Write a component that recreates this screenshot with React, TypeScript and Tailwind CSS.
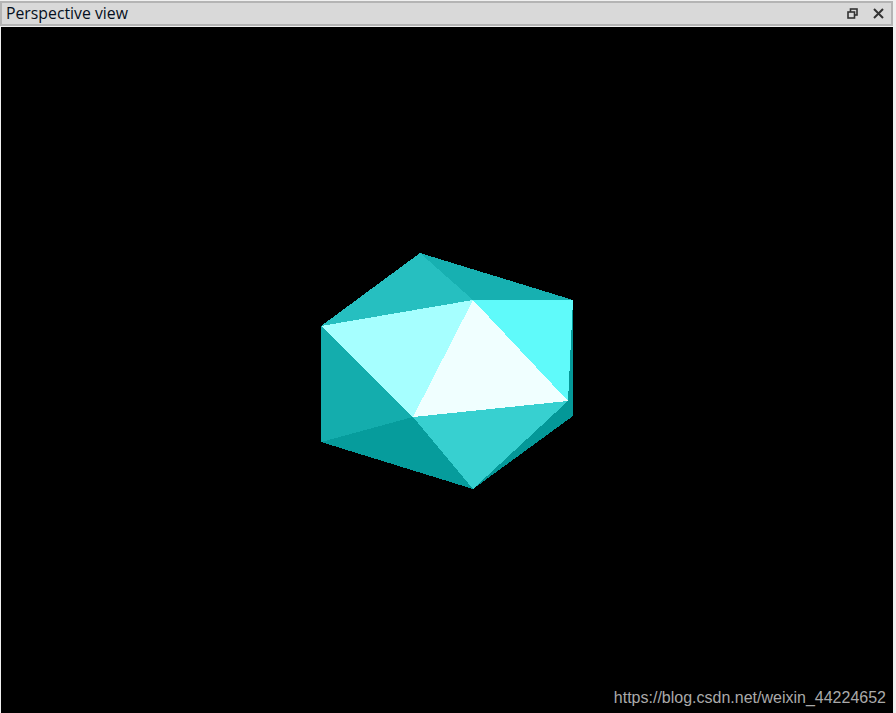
const faces: [string, string][] = [
  ["420,253 321,326 473,300", "#26bfc0"],
  ["420,253 473,300 573,300", "#17b0b1"],
  ["321,326 473,300 413,417", "#a6ffff"],
  ["473,300 568,401 413,417", "#f0ffff"],
  ["473,300 573,300 568,401", "#5ffafa"],
  ["321,326 413,417 321,442", "#14adad"],
  ["321,442 413,417 473,489", "#069c9c"],
  ["413,417 568,401 473,489", "#37d0d0"],
  ["573,300 573,416 473,489 568,401", "#049898"],
];

export default function App() {
  return (
    <div className="flex h-[713px] w-[896px] flex-col overflow-hidden bg-[#f0f0f0]">
      <div className="mt-px flex h-[25px] w-[893px] shrink-0 items-center justify-between border-2 border-[#b4b4b4] bg-[#d9d9d9] pl-1 pr-[7px] font-['Open_Sans',sans-serif] text-[15.8px] text-[#050f20]">
        <span>Perspective view</span>
        <div className="flex items-center gap-[15px]">
          <svg width="11" height="11" viewBox="0 0 11 11" fill="none" stroke="#333" strokeWidth="1.6">
            <rect x="3.5" y="1" width="6.5" height="6" />
            <rect x="1" y="4" width="6.5" height="6" fill="#d9d9d9" />
          </svg>
          <svg width="11" height="11" viewBox="0 0 11 11" fill="none" stroke="#333" strokeWidth="2">
            <path d="M1 1L10 10M10 1L1 10" />
          </svg>
        </div>
      </div>
      <div className="relative ml-px mt-px w-[892px] flex-1 bg-black">
        <svg className="absolute left-[-1px] top-[-27px]" width="896" height="713" viewBox="0 0 896 713">
          {faces.map(([points, fill]) => (
            <polygon key={points} points={points} fill={fill} shapeRendering="crispEdges" />
          ))}
        </svg>
        <span className="absolute bottom-[3px] right-[7px] font-['Liberation_Sans',sans-serif] text-[16px] text-[#aaaaaa]">
          https://blog.csdn.net/weixin_44224652
        </span>
      </div>
    </div>
  );
}
